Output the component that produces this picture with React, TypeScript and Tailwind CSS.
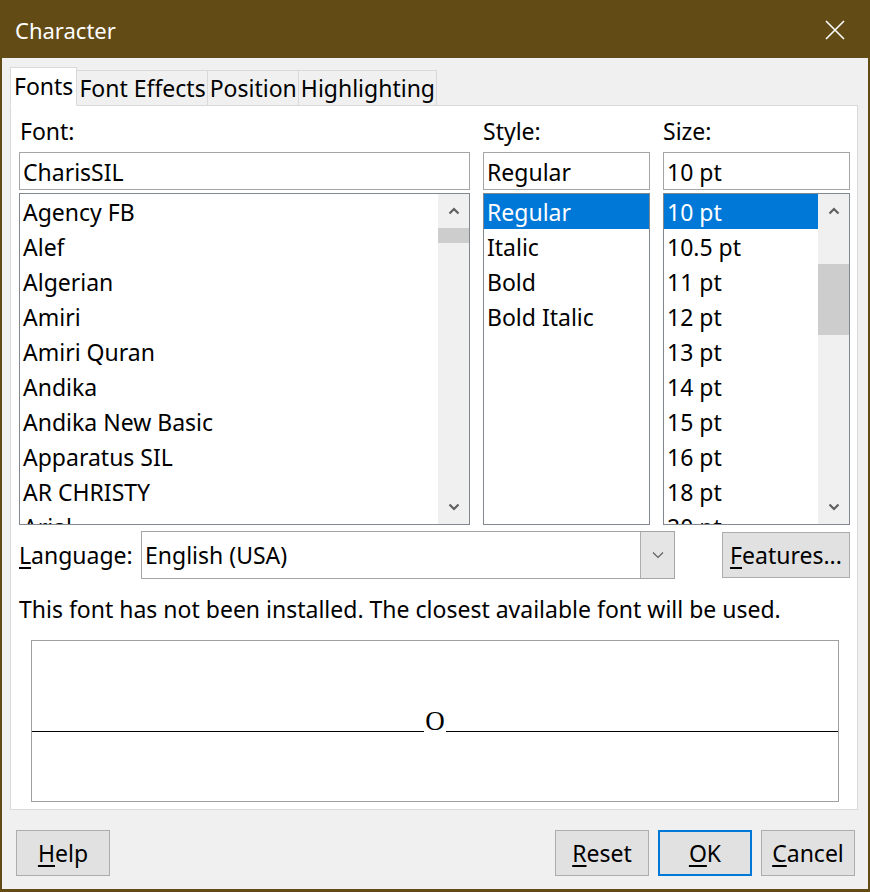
import { ReactNode } from "react"

const fonts = [
  "Agency FB",
  "Alef",
  "Algerian",
  "Amiri",
  "Amiri Quran",
  "Andika",
  "Andika New Basic",
  "Apparatus SIL",
  "AR CHRISTY",
  "Arial",
]
const styles = ["Regular", "Italic", "Bold", "Bold Italic"]
const sizes = ["10 pt", "10.5 pt", "11 pt", "12 pt", "13 pt", "14 pt", "15 pt", "16 pt", "18 pt", "20 pt"]

function Chevron({ up }: { up?: boolean }) {
  return (
    <svg width="12" height="8" viewBox="0 0 12 8">
      <polyline
        points={up ? "1.5,6.5 6,2 10.5,6.5" : "1.5,1.5 6,6 10.5,1.5"}
        fill="none"
        stroke="#606060"
        strokeWidth="2.2"
      />
    </svg>
  )
}

// vertical scrollbar drawn inside a list box
function ScrollBar({ thumbTop, thumbHeight }: { thumbTop: number; thumbHeight: number }) {
  return (
    <div className="w-[31px] h-full bg-[#f0f0f0] flex flex-col shrink-0">
      <div className="h-[34px] flex items-center justify-center shrink-0">
        <Chevron up />
      </div>
      <div className="flex-1 relative">
        <div className="absolute left-0 right-0 bg-[#cdcdcd]" style={{ top: thumbTop, height: thumbHeight }} />
      </div>
      <div className="h-[34px] flex items-center justify-center shrink-0">
        <Chevron />
      </div>
    </div>
  )
}

function ListBox({
  items,
  selected,
  scroll,
  width,
}: {
  items: string[]
  selected?: number
  scroll?: { top: number; height: number }
  width: string
}) {
  return (
    <div className={`${width} h-[332px] border border-[#828790] bg-white flex overflow-hidden`}>
      <div className="flex-1 overflow-hidden">
        {items.map((it, i) => (
          <div
            key={it}
            className={`h-[35px] pl-[3px] pt-[2px] flex items-center whitespace-nowrap ${
              i === selected ? "bg-[#0078d7] text-white" : "text-black"
            }`}
          >
            {it}
          </div>
        ))}
      </div>
      {scroll && <ScrollBar thumbTop={scroll.top} thumbHeight={scroll.height} />}
    </div>
  )
}

function Button({ children, w, focused }: { children: ReactNode; w: string; focused?: boolean }) {
  return (
    <div
      className={`${w} h-[46px] flex items-center justify-center bg-[#e1e1e1] ${
        focused ? "border-2 border-[#0078d7]" : "border border-[#adadad]"
      }`}
    >
      {children}
    </div>
  )
}

export default function App() {
  return (
    <div
      className="w-[870px] h-[892px] bg-[#634b16] flex flex-col px-[2px] pb-[3px] text-[23px] text-black"
      style={{ fontFamily: '"Noto Sans", sans-serif' }}
    >
      {/* Title bar */}
      <div className="h-[58px] shrink-0 flex items-center justify-between pl-[13px] pr-[23px] pt-[2px] text-white text-[22px]">
        <span>Character</span>
        <svg width="20" height="20" viewBox="0 0 20 20">
          <path d="M1 1 L19 19 M19 1 L1 19" stroke="white" strokeWidth="1.6" />
        </svg>
      </div>

      <div className="flex-1 bg-[#f0f0f0] flex flex-col">
        {/* Tabs */}
        <div className="flex items-end pl-[8px] mt-[9px] h-[39px] -mb-px relative z-10">
          <div className="h-[39px] px-[3px] bg-white border border-[#d9d9d9] border-b-white flex items-center">
            Fonts
          </div>
          <div className="h-[36px] pl-[2px] pr-[1px] border border-l-0 border-b-0 border-[#d9d9d9] flex items-center">
            Font Effects
          </div>
          <div className="h-[36px] pl-[2px] pr-[1px] border border-l-0 border-b-0 border-[#d9d9d9] flex items-center">
            Position
          </div>
          <div className="h-[36px] pl-[2px] pr-[1px] border border-l-0 border-b-0 border-[#d9d9d9] flex items-center">
            Highlighting
          </div>
        </div>

        {/* Tab panel */}
        <div className="ml-[8px] mr-[10px] h-[705px] bg-white border border-[#d9d9d9] pl-[8px] pr-[6px] pt-[10px] flex flex-col">
          <div className="flex gap-[13px]">
            <div className="w-[451px] flex flex-col">
              <div className="h-[30px] flex items-center pl-[1px] mb-[6px]">Font:</div>
              <div className="h-[38px] border border-[#a5a5a5] pl-[3px] pt-[2px] flex items-center mb-[3px]">CharisSIL</div>
              <ListBox items={fonts} width="w-[451px]" scroll={{ top: 0, height: 15 }} />
            </div>
            <div className="w-[167px] flex flex-col">
              <div className="h-[30px] flex items-center mb-[6px]">Style:</div>
              <div className="h-[38px] border border-[#a5a5a5] pl-[3px] pt-[2px] flex items-center mb-[3px]">Regular</div>
              <ListBox items={styles} selected={0} width="w-[167px]" />
            </div>
            <div className="w-[187px] flex flex-col">
              <div className="h-[30px] flex items-center mb-[6px]">Size:</div>
              <div className="h-[38px] border border-[#a5a5a5] pl-[3px] pt-[2px] flex items-center mb-[3px]">10 pt</div>
              <ListBox items={sizes} selected={0} width="w-[187px]" scroll={{ top: 36, height: 71 }} />
            </div>
          </div>

          {/* Language row */}
          <div className="flex items-center mt-[6px] h-[48px]">
            <span className="w-[122px]">
              <span className="underline underline-offset-[3px]">L</span>anguage:
            </span>
            <div className="w-[534px] h-[48px] border border-[#a5a5a5] flex">
              <div className="flex-1 pl-[3px] flex items-center">English (USA)</div>
              <div className="w-[34px] bg-[#e5e5e5] border-l border-[#adadad] flex items-center justify-center">
                <svg width="12" height="8" viewBox="0 0 12 8">
                  <polyline points="1,1.5 6,6.5 11,1.5" fill="none" stroke="#606060" strokeWidth="1.2" />
                </svg>
              </div>
            </div>
            <div className="ml-[47px]">
              <Button w="w-[128px]">
                <span>
                  <span className="underline underline-offset-[3px]">F</span>eatures...
                </span>
              </Button>
            </div>
          </div>

          <div className="mt-[15px] h-[30px] flex items-center">
            This font has not been installed. The closest available font will be used.
          </div>

          {/* Preview */}
          <div className="ml-[12px] mt-[16px] w-[808px] h-[162px] border border-[#a0a0a0] flex items-center">
            <div className="flex-1 h-px bg-black mt-[21px]" />
            <span
              className="px-[1px] text-[27px] leading-none"
              style={{ fontFamily: '"Liberation Serif", serif' }}
            >
              O
            </span>
            <div className="flex-1 h-px bg-black mt-[21px]" />
          </div>
        </div>

        {/* Bottom buttons */}
        <div className="flex items-center mt-[20px] pl-[14px] pr-[13px]">
          <Button w="w-[94px]">
            <span>
              <span className="underline underline-offset-[3px]">H</span>elp
            </span>
          </Button>
          <div className="flex-1" />
          <div className="flex gap-[9px]">
            <Button w="w-[94px]">
              <span>
                <span className="underline underline-offset-[3px]">R</span>eset
              </span>
            </Button>
            <Button w="w-[94px]" focused>
              <span>
                <span className="underline underline-offset-[3px]">O</span>K
              </span>
            </Button>
            <Button w="w-[94px]">
              <span>
                <span className="underline underline-offset-[3px]">C</span>ancel
              </span>
            </Button>
          </div>
        </div>
      </div>
    </div>
  )
}
